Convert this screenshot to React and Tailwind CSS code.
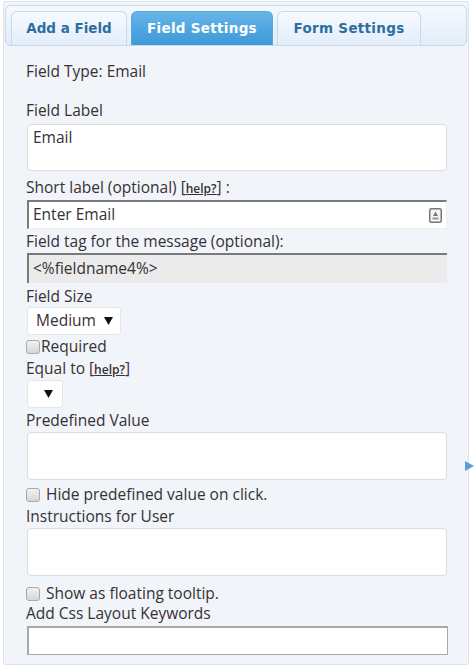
import React from "react";

function Checkbox() {
  return (
    <span className="inline-block w-[14px] h-[14px] rounded-[3px] border border-[#a9a9a9] bg-gradient-to-b from-[#f2f2f2] to-[#d6d6d6] shrink-0" />
  );
}

function Label({ children, className = "" }) {
  return <div className={"h-[20px] leading-[20px] whitespace-nowrap " + className}>{children}</div>;
}

function Help() {
  return (
    <span>
      [<span className="text-[12px] underline font-semibold">help?</span>]
    </span>
  );
}

function Arrow() {
  return (
    <svg width="9" height="8" viewBox="0 0 9 8">
      <path d="M0 0 H9 L4.5 8 Z" fill="#111" />
    </svg>
  );
}

export default function App() {
  const tabBase =
    "h-[34px] rounded-t-[6px] border border-b-0 flex items-center justify-center font-bold text-[13.5px] tracking-[0.3px]";
  return (
    <div
      className="relative w-[474px] h-[668px] bg-white text-[15.5px] text-[#353134]"
      style={{ fontFamily: '"Open Sans", "Noto Sans", sans-serif' }}
    >
      <div className="absolute left-[3px] top-[1px] w-[466px] h-[664px] border border-[#dfe4ea] bg-[#f1f4f8] rounded-[2px]">
        <div className="mx-[1px] mt-[3px] h-[41px] rounded-[6px] border border-[#c5dbec] bg-gradient-to-b from-[#f5f9fd] to-[#e1edf9] flex items-end gap-[4px] pl-[5px]"
          style={{ fontFamily: '"DejaVu Sans", Verdana, sans-serif' }}>
          <div className={tabBase + " w-[116px] border-[#c5dbec] bg-gradient-to-b from-[#f6fafe] to-[#e2eefa] text-[#2e6e9e] tracking-[0px]"}>
            Add a Field
          </div>
          <div className={tabBase + " w-[142px] border-[#5aa5da] bg-gradient-to-b from-[#68b6ea] via-[#4fa6e0] to-[#3d9ad9] text-white"}>
            Field Settings
          </div>
          <div className={tabBase + " w-[144px] border-[#c5dbec] bg-gradient-to-b from-[#f6fafe] to-[#e2eefa] text-[#2e6e9e]"}>
            Form Settings
          </div>
        </div>

        <div className="pl-[22px]">
          <Label className="mt-[15px]">Field Type: Email</Label>

          <Label className="mt-[19px]">Field Label</Label>
          <div className="ml-[1px] mt-[4px] w-[420px] h-[47px] bg-white border border-[#dcdcdc] rounded-[4px] px-[5px] pt-[2px] leading-[20px]">
            Email
          </div>

          <Label className="mt-[6px]">
            Short label (optional) <Help /> :
          </Label>
          <div className="ml-[1px] mt-[3px] w-[420px] h-[29px] bg-white border-t-2 border-l-2 border-r border-b border-t-[#7a7a7a] border-l-[#7a7a7a] border-r-[#eeeeee] border-b-[#eeeeee] flex items-center justify-between pl-[4px] pr-[4px]">
            <span>Enter Email</span>
            <svg width="13" height="15" viewBox="0 0 13 15">
              <rect x="0.75" y="0.75" width="11.5" height="13.5" rx="1.5" fill="#f4f4f4" stroke="#777" strokeWidth="1.5" />
              <path d="M6.5 3.5 L9 8 H4 Z" fill="#777" />
              <rect x="3.5" y="9.5" width="6" height="2" fill="#999" />
            </svg>
          </div>

          <Label className="mt-[2px]">Field tag for the message (optional):</Label>
          <div className="ml-[1px] mt-[2px] w-[420px] h-[30px] bg-[#ebebeb] border-t-2 border-l-2 border-t-[#7a7a7a] border-l-[#7a7a7a] flex items-center pl-[4px]">
            &lt;%fieldname4%&gt;
          </div>

          <Label className="mt-[3px]">Field Size</Label>
          <div className="ml-[1px] mt-[1px] w-[94px] h-[28px] bg-white border border-[#e6e6e6] rounded-[3px] flex items-center justify-between pl-[8px] pr-[7px]">
            <span>Medium</span>
            <Arrow />
          </div>

          <div className="mt-[2px] h-[20px] flex items-center">
            <Checkbox />
            <span className="ml-[1px]">Required</span>
          </div>

          <Label className="mt-[1px]">
            Equal to <Help />
          </Label>
          <div className="ml-[1px] mt-[2px] w-[36px] h-[28px] bg-white border border-[#e6e6e6] rounded-[3px] flex items-center justify-end pr-[9px]">
            <Arrow />
          </div>

          <Label className="mt-[2px]">Predefined Value</Label>
          <div className="ml-[1px] mt-[2px] w-[420px] h-[48px] bg-white border border-[#dcdcdc] rounded-[4px]" />

          <div className="mt-[5px] h-[20px] flex items-center">
            <Checkbox />
            <span className="ml-[6px]">Hide predefined value on click.</span>
          </div>

          <Label className="mt-[1px]">Instructions for User</Label>
          <div className="ml-[1px] mt-[2px] w-[420px] h-[48px] bg-white border border-[#dcdcdc] rounded-[4px]" />

          <div className="mt-[8px] h-[19px] flex items-center">
            <Checkbox />
            <span className="ml-[6px] leading-[19px]">Show as floating tooltip.</span>
          </div>

          <Label className="mt-[0px]">Add Css Layout Keywords</Label>
          <div className="ml-[1px] mt-[3px] w-[421px] h-[29px] bg-white border border-[#a8a8a8] border-t-2 border-l-2" />
        </div>
      </div>

      <div className="absolute left-[465px] top-[461px] w-0 h-0 border-t-[5px] border-b-[5px] border-l-[9px] border-t-transparent border-b-transparent border-l-[#5d9dd2]" />
    </div>
  );
}
